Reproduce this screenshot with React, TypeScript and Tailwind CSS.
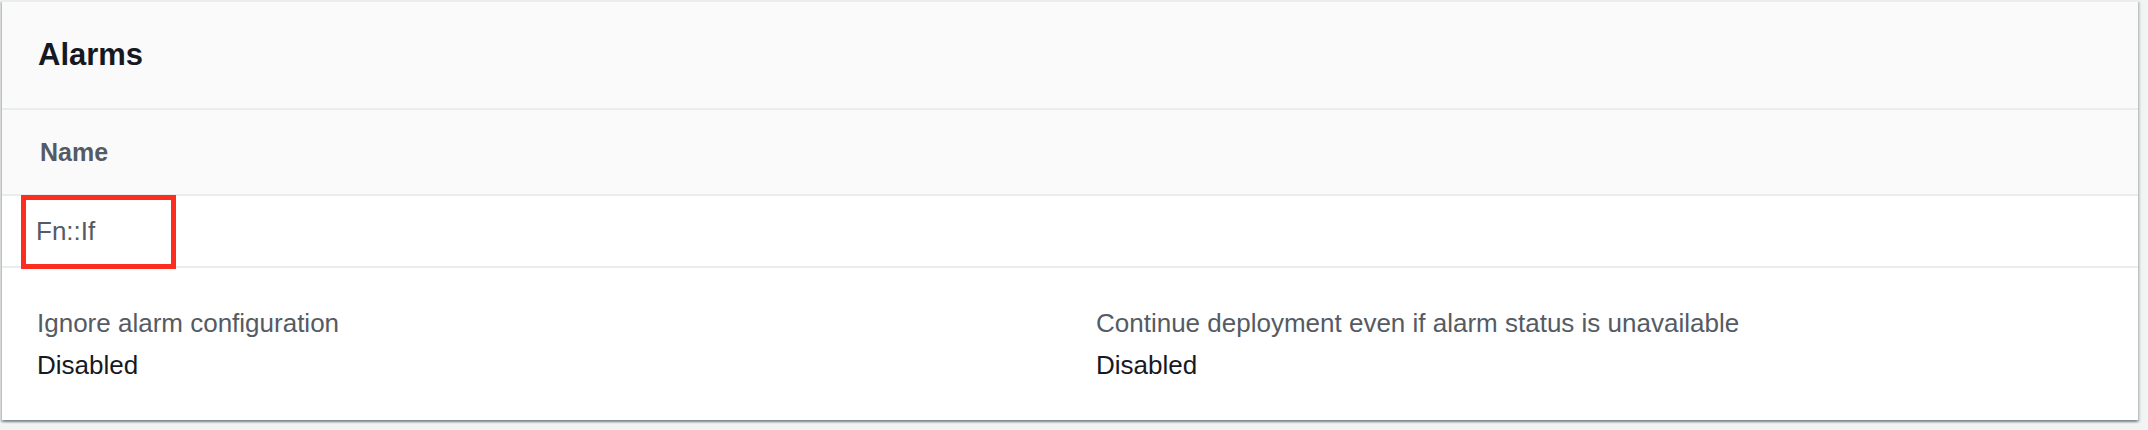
const FONT = "font-['Liberation_Sans',Arial,sans-serif]";

function Field({ label, value }: { label: string; value: string }) {
  return (
    <div className="flex flex-col">
      <span className="text-[26px] leading-[42px] text-[#545b64]">{label}</span>
      <span className="text-[26px] leading-[42px] text-[#16191f]">{value}</span>
    </div>
  );
}

export default function App() {
  return (
    <div className={`${FONT} h-[430px] w-[2148px] bg-[#f2f3f3] pl-[2px]`}>
      <div className="relative w-[2136px] border-t-2 border-[#eaeded] bg-white shadow-[0_2px_2px_0_rgba(0,28,36,0.3),2px_2px_2px_0_rgba(0,28,36,0.15),-2px_2px_2px_0_rgba(0,28,36,0.15)]">
        {/* header */}
        <div className="flex h-[108px] items-center border-b-2 border-[#eaeded] bg-[#fafafa] pl-[36px]">
          <h2 className="text-[31px] font-bold leading-[40px] text-[#16191f]">Alarms</h2>
        </div>

        {/* table */}
        <div className="flex h-[86px] items-center border-b-2 border-[#eaeded] bg-[#fafafa] pl-[38px]">
          <span className="text-[25px] font-bold leading-[36px] text-[#545b64]">Name</span>
        </div>
        <div className="flex h-[72px] items-center border-b-2 border-[#eaeded] pl-[34px]">
          <span className="text-[26px] leading-[36px] text-[#545b64]">Fn::If</span>
        </div>

        {/* highlight annotation */}
        <div className="pointer-events-none absolute left-[19px] top-[193px] h-[74px] w-[155px] border-[5px] border-[#fd2d20]" />

        {/* settings */}
        <div className="grid grid-cols-[1059px_1fr] pb-[34px] pl-[35px] pt-[34px]">
          <Field label="Ignore alarm configuration" value="Disabled" />
          <Field label="Continue deployment even if alarm status is unavailable" value="Disabled" />
        </div>
      </div>
    </div>
  );
}
